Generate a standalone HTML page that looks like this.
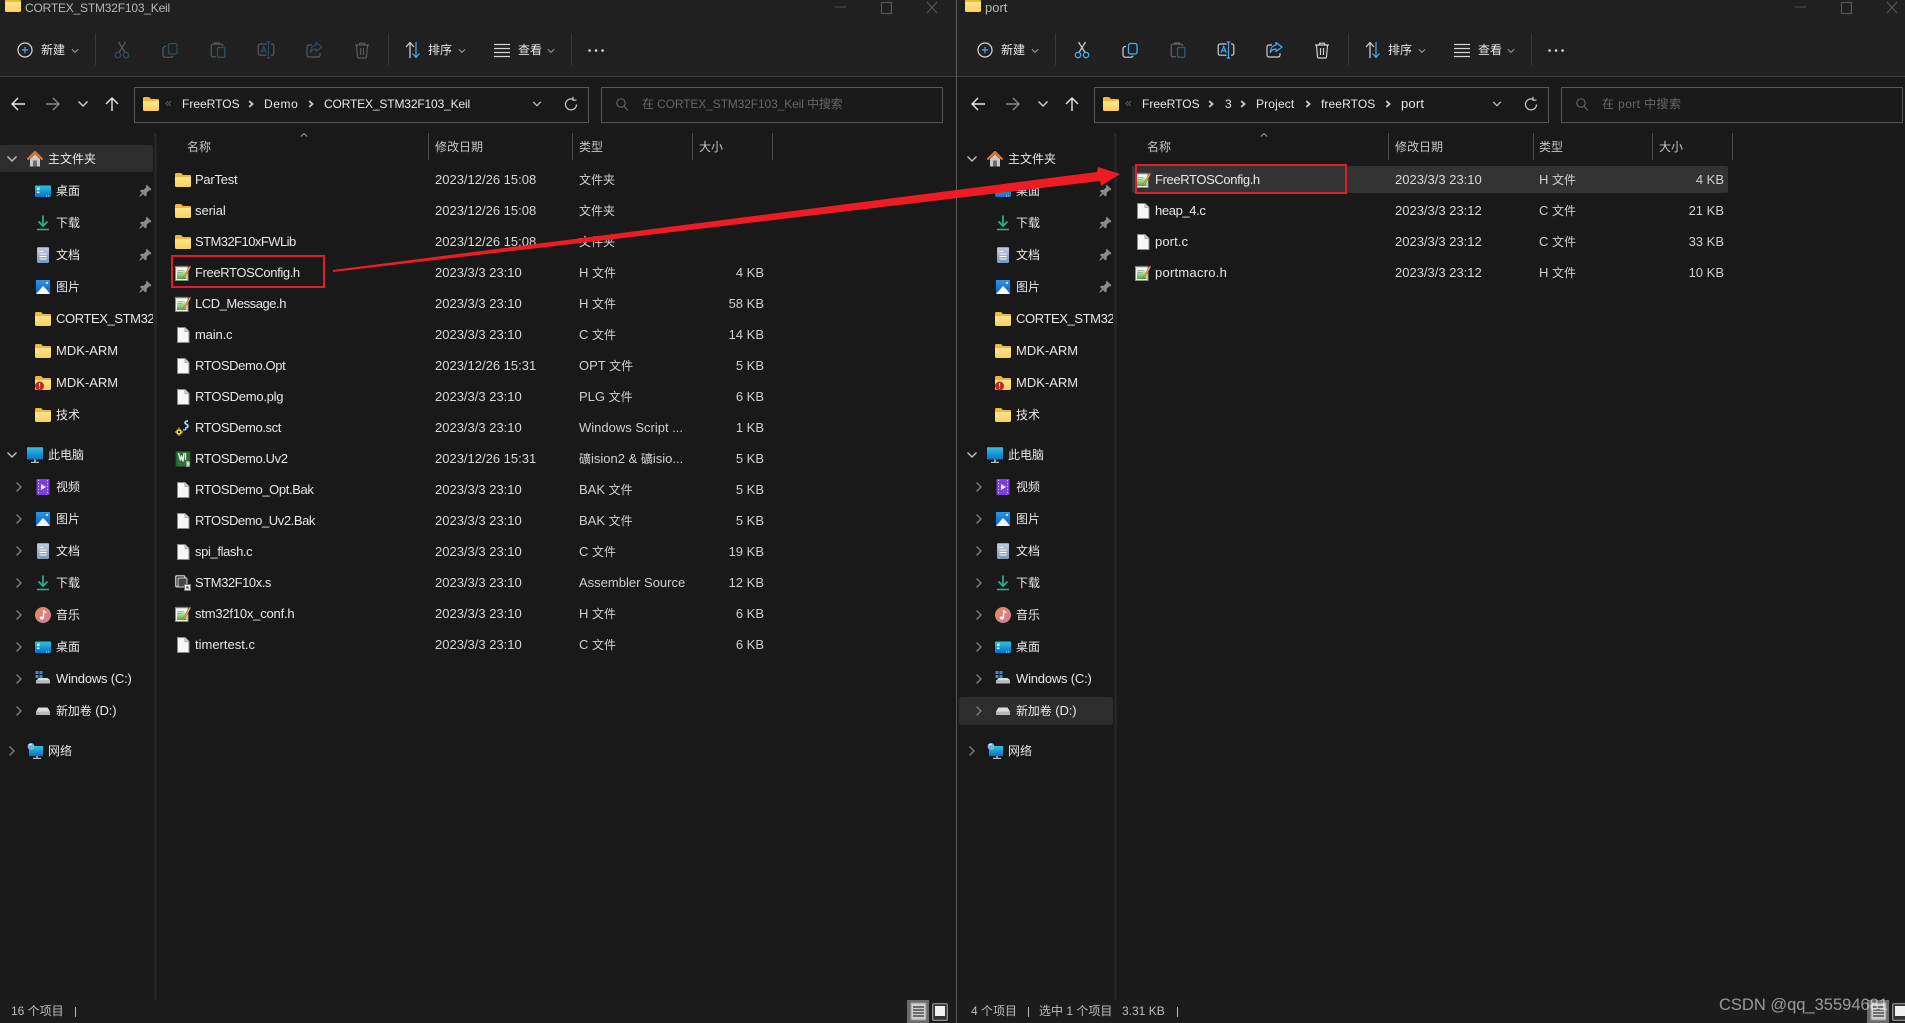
<!DOCTYPE html>
<html lang="zh">
<head>
<meta charset="utf-8">
<title>FreeRTOS</title>
<style>
html,body{margin:0;padding:0;width:1905px;height:1023px;overflow:hidden;background:#191919}
body{font-family:"Liberation Sans","Noto Sans CJK SC",sans-serif;color:#e6e6e6;position:relative}
.w{position:absolute;top:0;height:1023px;overflow:hidden;background:#191919}
.in{position:absolute;top:0;left:0;width:960px;height:1023px}
.bar{position:absolute;left:-4px;top:0;width:964px;height:76px;background:#202020}
.ln{position:absolute;left:-4px;top:76px;width:964px;height:1px;background:#3d3d3d}
.st{position:absolute;left:-4px;top:1000px;width:964px;height:23px;background:#1c1c1c}
.dv{position:absolute;left:154px;top:133px;width:3px;height:867px;background:#252525}
.box{position:absolute;box-sizing:border-box;border:1px solid #565656;height:36px;top:87px}
.hl{position:absolute;background:#2d2d2d;border-radius:2px}
.sl{position:absolute;background:#333;border-radius:2px}
.t{position:absolute;white-space:nowrap;line-height:18px;margin-top:-9px;font-size:13px;color:#e8e8e8}
.n{letter-spacing:-.375px}
.d{color:#d8d8d8}
.y{color:#d0d0d0}
.s{text-align:right;width:60px;left:704px;color:#d0d0d0}
.c{font-size:12px}
.h{font-size:12px;color:#c4c4c4}
.a{font-size:12px;color:#e8e8e8}
.q{font-size:12px;color:#666}
.k{font-size:12px;color:#bdbdbd}
b{font-weight:normal;font-size:12px}
.i{position:absolute;width:16px;height:16px;overflow:visible}
.ti{position:absolute;width:20px;height:20px;top:40px;overflow:visible}
.sep{position:absolute;width:1px;background:#3a3a3a;top:33px;height:32px}
.hs{position:absolute;width:1px;background:#4b4b4b;top:133px;height:27px}
.tx{position:absolute;top:1007px;width:1px;height:10px;background:#bbb}
</style>
</head>
<body>
<svg width="0" height="0" style="position:absolute">
<defs>
<linearGradient id="gf" x1="0" y1="0" x2="0" y2="1"><stop offset="0" stop-color="#fee48e"/><stop offset="1" stop-color="#fad05e"/></linearGradient>
<linearGradient id="gb" x1="0" y1="0" x2="0" y2="1"><stop offset="0" stop-color="#2cc3e3"/><stop offset="1" stop-color="#0f6fc4"/></linearGradient>
<linearGradient id="gg" x1="0" y1="0" x2="0" y2="1"><stop offset="0" stop-color="#e8f3d6"/><stop offset="1" stop-color="#3fae3a"/></linearGradient>
<linearGradient id="gd" x1="0" y1="0" x2="0" y2="1"><stop offset="0" stop-color="#c0cedd"/><stop offset="1" stop-color="#7d96b2"/></linearGradient>
<linearGradient id="gp" x1="0" y1="0" x2="0" y2="1"><stop offset="0" stop-color="#2997e8"/><stop offset="1" stop-color="#0a5fc2"/></linearGradient>
<linearGradient id="gm" x1="0" y1="0" x2="1" y2="1"><stop offset="0" stop-color="#f08b4a"/><stop offset="1" stop-color="#c77aa8"/></linearGradient>
<symbol id="fo" viewBox="0 0 16 16"><path d="M0 2.500C0 1.700.5 1 1.300 1H6l2 2h7c.6 0 1 .4 1 1v2H0z" fill="#f0b73c"/><path d="M0 5h16v8.600c0 .8-.6 1.400-1.400 1.400H1.400C.6 15 0 14.400 0 13.600z" fill="url(#gf)"/></symbol>
<symbol id="fx" viewBox="0 0 16 16"><path d="M0 2.500C0 1.700.5 1 1.300 1H6l2 2h7c.6 0 1 .4 1 1v2H0z" fill="#f0b73c"/><path d="M0 5h16v8.600c0 .8-.6 1.400-1.400 1.400H1.400C.6 15 0 14.400 0 13.600z" fill="url(#gf)"/><circle cx="4.500" cy="11" r="4.500" fill="#c9231d"/><path d="M4.500 8v3.400M4.500 12.800v.9" stroke="#fff" stroke-width="1.200"/></symbol>
<symbol id="hf" viewBox="0 0 16 16"><rect x=".5" y="1.500" width="12.500" height="14" fill="#f6f6f6" stroke="#8d8d8d"/><path d="M1 1.500h12M2 .5v2M4 .5v2M6 .5v2M8 .5v2M10 .5v2M12 .5v2" stroke="#777" stroke-width=".8"/><rect x="2" y="5" width="9.500" height="9" fill="url(#gg)"/><path d="M2.500 5.500h6M2.500 7.500h5" stroke="#9a9a9a" stroke-width=".8"/><path d="M14.600 1 L8.500 12 L7.400 14.200 L9.600 13 L15.800 2z" fill="#f4b822" stroke="#8c5f10" stroke-width=".5"/><path d="M14.600 1l1.200 1" stroke="#d43a2a" stroke-width="1.400"/></symbol>
<symbol id="dc" viewBox="0 0 16 16"><path d="M2.500.5h7.500L14 4.500v11H2.500z" fill="#f7f7f7" stroke="#8a8a8a"/><path d="M10 .5v4h4" fill="#d8d8d8" stroke="#9a9a9a" stroke-width=".8"/></symbol>
<symbol id="sc" viewBox="0 0 16 16"><path d="M13 1c-2 0-3 1-3 2s3 1.500 3 3-2 2-3 2" fill="none" stroke="#39b8c9" stroke-width="2"/><path d="M13 1c-2 0-3 1-3 2s3 1.500 3 3-2 2-3 2" fill="none" stroke="#e6f7fa" stroke-width=".7"/><path d="M8 10c1.500 0 3-.3 3-1" stroke="#ddd" stroke-width="1.200" fill="none"/><circle cx="4" cy="12" r="3.300" fill="#e8e020" stroke="#222" stroke-width=".8"/><circle cx="4" cy="12" r="1.200" fill="#111"/><path d="M4 7.500v1.500M4 15v1M0 12h1M7 12h1" stroke="#e8e020"/></symbol>
<symbol id="uv" viewBox="0 0 16 16"><rect x="1" y=".5" width="14" height="15" fill="#2f6f3a" stroke="#1d4a25"/><path d="M3.500 2l2 7.500 1-5 1.500 6 1-8.500M10.500 2v7" stroke="#e6f2e6" stroke-width="1.300" fill="none"/><path d="M11 11h3v1.500h-2v.8h2V15h-3" fill="none" stroke="#fff" stroke-width=".9"/></symbol>
<symbol id="as" viewBox="0 0 16 16"><rect x=".8" y=".8" width="9" height="11" rx="1" fill="#222" stroke="#e2e2e2" stroke-width="1.200"/><rect x="3" y="3" width="9" height="9" rx="1" fill="#444" stroke="#d0d0d0"/><rect x="9.500" y="9.500" width="6" height="6" fill="#eee" stroke="#777"/><rect x="11.500" y="11.500" width="2" height="2" fill="#333"/></symbol>
<symbol id="de" viewBox="0 0 16 16"><rect x="0" y="2.500" width="16" height="11.500" rx="1" fill="url(#gb)"/><rect x="2" y="4.500" width="2.500" height="2.500" fill="#e6fbff"/><rect x="2" y="8.500" width="2.500" height="1.500" fill="#bdeefa"/><path d="M11 13h1M13 13h1" stroke="#e6fbff" stroke-width=".8"/></symbol>
<symbol id="dl" viewBox="0 0 16 16"><path d="M8 .5v10M3.500 6.500L8 11l4.500-4.500" fill="none" stroke="#26b58f" stroke-width="1.700"/><path d="M2 14.500h12" stroke="#26b58f" stroke-width="1.500"/></symbol>
<symbol id="dt" viewBox="0 0 16 16"><rect x="2" y=".2" width="12" height="15.800" rx="1" fill="url(#gd)"/><path d="M4.500 4.500h4M4.500 7h7M4.500 9.500h7M4.500 12h7" stroke="#fff" stroke-width="1"/></symbol>
<symbol id="pc" viewBox="0 0 16 16"><rect x="1" y="1" width="14" height="14" fill="url(#gp)"/><path d="M1 15L8 7l4 4 3 4z" fill="#f5f8fc"/><circle cx="12" cy="4" r="1" fill="#fff"/></symbol>
<symbol id="ho" viewBox="0 0 16 16"><path d="M3 8v7.500h10V8L8 3z" fill="#c8c8c8"/><rect x="6" y="9.500" width="4" height="6" fill="#6d6d6d"/><path d="M.5 8.500L8 1l7.500 7.500" fill="none" stroke="#e9751d" stroke-width="2.200"/></symbol>
<symbol id="co" viewBox="0 0 16 16"><rect x="0" y=".2" width="16" height="12.300" rx=".5" fill="url(#gb)"/><rect x="7" y="12.500" width="2" height="2.500" fill="#9aa5ad"/><rect x="4" y="14.800" width="8" height="1.200" fill="#b5bec5"/></symbol>
<symbol id="vi" viewBox="0 0 16 16"><rect x="1.500" y="0" width="13" height="16" rx="1" fill="#7c3ee0"/><path d="M3 1.500h1M3 4.500h1M3 7.500h1M3 10.500h1M3 13.500h1M12 1.500h1M12 4.500h1M12 7.500h1M12 10.500h1M12 13.500h1" stroke="#d9c6ff" stroke-width="1.300"/><path d="M6 5l5 3-5 3z" fill="#f1e7ff"/></symbol>
<symbol id="mu" viewBox="0 0 16 16"><circle cx="8" cy="8" r="8" fill="url(#gm)"/><path d="M8.500 3v8M8.500 3.500c1 1 2 1 2.500 2.500" stroke="#fff" stroke-width="1.300" fill="none"/><ellipse cx="6.800" cy="11" rx="2" ry="1.500" fill="#fff"/></symbol>
<symbol id="wi" viewBox="0 0 16 16"><path d="M.5 0h3v3h-3zM4.500 0h3v3h-3zM.5 4h3v3h-3zM4.500 4h3v3h-3z" fill="#1e96e6"/><path d="M2 9l1.500-2h9L15 9z" fill="#dcdcdc"/><rect x="1" y="9" width="14" height="3.500" rx=".5" fill="#bcbcbc"/><rect x="2.500" y="10.200" width="1.500" height="1" fill="#3edb4c"/></symbol>
<symbol id="dr" viewBox="0 0 16 16"><path d="M3.500 4.500h9L15 8.500H1z" fill="#dedede"/><rect x="1" y="8.500" width="14" height="3.500" rx=".6" fill="#b9b9b9"/><rect x="2.500" y="9.700" width="1.500" height="1" fill="#3edb4c"/></symbol>
<symbol id="ne" viewBox="0 0 16 16"><rect x="2" y="3" width="14" height="10" fill="url(#gb)"/><rect x="9" y="13" width="2" height="1.800" fill="#9aa5ad"/><rect x="6" y="14.800" width="8" height="1.200" fill="#b5bec5"/><circle cx="4" cy="3.500" r="3.500" fill="#6db9dd"/><path d="M2 2.500a2 2 0 0 1 2.500-1" stroke="#e7fbff" fill="none"/></symbol>
<symbol id="pn" viewBox="0 0 16 16"><path d="M9.500 1.500l5 5-1.500 1-.8-.2-2.600 2.600.2 2.400-1.300 1.200-5.500-5.500 1.200-1.300 2.400.2 2.600-2.600-.2-.8zM4.500 10l-3 4.500 4.500-3z" fill="#8b8b8b"/></symbol>
<symbol id="cd" viewBox="0 0 16 16"><path d="M3.500 5.500L8 10l4.500-4.500" fill="none" stroke="currentColor" stroke-width="1.500"/></symbol>
<symbol id="cr" viewBox="0 0 16 16"><path d="M5.500 3.500L10 8l-4.500 4.500" fill="none" stroke="currentColor" stroke-width="1.500"/></symbol>
<symbol id="cb" viewBox="0 0 16 16"><path d="M5 3L10.500 8 5 13" fill="none" stroke="currentColor" stroke-width="3"/></symbol>
<symbol id="tc" viewBox="0 0 20 20"><path d="M6.500 2L13 12.500M13.500 2L7 12.500" stroke="#cfcfcf" stroke-width="1.200" fill="none"/><circle cx="6" cy="15" r="2.700" stroke="#45ade8" stroke-width="1.300" fill="none"/><circle cx="14" cy="15" r="2.700" stroke="#45ade8" stroke-width="1.300" fill="none"/></symbol>
<symbol id="tp" viewBox="0 0 20 20"><rect x="8.500" y="3.500" width="8.500" height="10.500" rx="1.800" stroke="#45ade8" stroke-width="1.300" fill="none"/><path d="M6 6.500H5.200A2.200 2.200 0 0 0 3 8.700V15a2.200 2.200 0 0 0 2.200 2.200H11a2.200 2.200 0 0 0 2-1.500" stroke="#cfcfcf" stroke-width="1.200" fill="none"/></symbol>
<symbol id="tv" viewBox="0 0 20 20"><path d="M8 16.800H5A1.800 1.800 0 0 1 3.200 15V6A1.800 1.800 0 0 1 5 4.200h8A1.800 1.800 0 0 1 14.800 6" stroke="#cfcfcf" stroke-width="1.200" fill="none"/><path d="M6.500 4.500V3h5v1.500" stroke="#cfcfcf" stroke-width="1.200" fill="none"/><rect x="9.500" y="7.500" width="7.300" height="9.800" rx="1" stroke="#45ade8" stroke-width="1.300" fill="none"/></symbol>
<symbol id="tr" viewBox="0 0 20 20"><path d="M10.500 4H4a1.800 1.800 0 0 0-1.800 1.800v7.600A1.800 1.800 0 0 0 4 15.200h6.500M15 4h1a1.800 1.800 0 0 1 1.800 1.800v7.600a1.800 1.800 0 0 1-1.800 1.800h-1" stroke="#cfcfcf" stroke-width="1.200" fill="none"/><path d="M10.700 2h3.600M10.700 18h3.600M12.500 2v16" stroke="#45ade8" stroke-width="1.200" fill="none"/><path d="M5 12.800L7.700 6.500l2.700 6.300M6 10.800h3.400" stroke="#45ade8" stroke-width="1.200" fill="none"/></symbol>
<symbol id="ts" viewBox="0 0 20 20"><path d="M8 5H5A2 2 0 0 0 3 7v8a2 2 0 0 0 2 2h9a2 2 0 0 0 2-2v-2" stroke="#cfcfcf" stroke-width="1.200" fill="none"/><path d="M12 2.500l6 4.500-6 4.500V9c-3 0-4.500 1-5.700 3.500C6.500 8.500 8.500 5.500 12 5.200z" stroke="#45ade8" stroke-width="1.200" fill="none" stroke-linejoin="round"/></symbol>
<symbol id="td" viewBox="0 0 20 20"><path d="M3 5h14M7.500 5V3.200h5V5M4.500 5l1 12a1.300 1.300 0 0 0 1.300 1h6.400a1.300 1.300 0 0 0 1.300-1l1-12M8.500 8v7M11.500 8v7" stroke="#cfcfcf" stroke-width="1.200" fill="none"/></symbol>
<symbol id="tn" viewBox="0 0 20 20"><circle cx="10" cy="10" r="7" stroke="#d6d6d6" stroke-width="1.200" fill="none"/><path d="M10 6.800v6.400M6.800 10h6.400" stroke="#45ade8" stroke-width="1.200"/></symbol>
<symbol id="to" viewBox="0 0 20 20"><path d="M7 18V3M3 7l4-4.500L11 7" stroke="#d6d6d6" stroke-width="1.200" fill="none"/><path d="M13 2v15.500M9.500 13.500l3.500 4 3.500-4" stroke="#45ade8" stroke-width="1.200" fill="none"/></symbol>
<symbol id="tl" viewBox="0 0 20 20"><path d="M2 4.500h16M2 8.500h16M2 12.500h16M2 16.500h16" stroke="#d6d6d6" stroke-width="1.200"/></symbol>
<symbol id="vd" viewBox="0 0 22 23"><rect width="22" height="23" fill="#6b6b6b"/><rect x="4" y="3" width="15" height="17" fill="#cfcfcf" stroke="#999"/><path d="M6 7h11M6 10h11M6 13h11M6 16h11" stroke="#333" stroke-width="1.200"/></symbol>
<symbol id="vt" viewBox="0 0 16 18"><rect x=".7" y=".7" width="14.600" height="16.600" rx="1" fill="#333" stroke="#9a9a9a" stroke-width="1.200"/><rect x="3" y="3" width="10" height="10" fill="#f2f2f2"/></symbol>
</defs>
</svg>

<!-- LEFT WINDOW -->
<div class="w" style="left:0;width:956px"><div class="in">
<div class="bar"></div><div class="ln"></div><div class="st"></div>
<svg class="i" style="left:5px;top:-3px"><use href="#fo"/></svg>
<span class="t a" style="left:25px;top:8px;color:#b8b8b8;letter-spacing:-.2px">CORTEX_STM32F103_Keil</span>
<svg class="i" style="left:833px;top:-1px"><path d="M2 8h11" stroke="#555"/></svg>
<svg class="i" style="left:878px;top:-1px"><rect x="3.500" y="3.500" width="10" height="11" fill="none" stroke="#555" stroke-width="1.200"/></svg>
<svg class="i" style="left:924px;top:-1px"><path d="M3 3l10 11M13 3L3 14" stroke="#555" stroke-width="1.100"/></svg>

<svg class="ti" style="left:15px"><use href="#tn"/></svg>
<span class="t c" style="left:41px;top:50px;color:#e6e6e6">新建</span>
<svg class="i" style="left:67px;top:43px;color:#999;transform:scale(.7)"><use href="#cd"/></svg>
<div class="sep" style="left:95px"></div>
<svg class="ti" style="left:112px;opacity:.33"><use href="#tc"/></svg>
<svg class="ti" style="left:160px;opacity:.33"><use href="#tp"/></svg>
<svg class="ti" style="left:208px;opacity:.33"><use href="#tv"/></svg>
<svg class="ti" style="left:256px;opacity:.33"><use href="#tr"/></svg>
<svg class="ti" style="left:304px;opacity:.33"><use href="#ts"/></svg>
<svg class="ti" style="left:352px;opacity:.33"><use href="#td"/></svg>
<div class="sep" style="left:388px"></div>
<svg class="ti" style="left:403px"><use href="#to"/></svg>
<span class="t c" style="left:428px;top:50px">排序</span>
<svg class="i" style="left:454px;top:43px;color:#999;transform:scale(.7)"><use href="#cd"/></svg>
<svg class="ti" style="left:492px"><use href="#tl"/></svg>
<span class="t c" style="left:518px;top:50px">查看</span>
<svg class="i" style="left:543px;top:43px;color:#999;transform:scale(.7)"><use href="#cd"/></svg>
<div class="sep" style="left:571px"></div>
<svg class="i" style="left:588px;top:42px"><path d="M1.500 8.500h.1M8 8.500h.1M14.500 8.500h.1" stroke="#ddd" stroke-width="2.500" stroke-linecap="round"/></svg>

<svg class="i" style="left:10px;top:96px"><path d="M15 8H2M8 2L2 8l6 6" fill="none" stroke="#e6e6e6" stroke-width="1.400"/></svg>
<svg class="i" style="left:45px;top:96px"><path d="M1 8h13M8 2l6 6-6 6" fill="none" stroke="#8a8a8a" stroke-width="1.400"/></svg>
<svg class="i" style="left:75px;top:96px;color:#ccc"><use href="#cd"/></svg>
<svg class="i" style="left:104px;top:96px"><path d="M8 15V2M2 8l6-6 6 6" fill="none" stroke="#e6e6e6" stroke-width="1.400"/></svg>
<div class="box" style="left:134px;width:455px"></div>
<svg class="i" style="left:143px;top:96px"><use href="#fo"/></svg>
<span class="t c" style="left:165px;top:103px;color:#666">«</span>
<span class="t a" style="left:182px;top:104px">FreeRTOS</span>
<svg class="i" style="left:243px;top:96px;color:#ccc;transform:scale(.6)"><use href="#cb"/></svg>
<span class="t a" style="left:264px;top:104px;letter-spacing:.6px">Demo</span>
<svg class="i" style="left:303px;top:96px;color:#ccc;transform:scale(.6)"><use href="#cb"/></svg>
<span class="t a" style="left:324px;top:104px;letter-spacing:-.15px">CORTEX_STM32F103_Keil</span>
<svg class="i" style="left:529px;top:96px;color:#bbb;transform:scale(.85)"><use href="#cd"/></svg>
<svg class="i" style="left:563px;top:96px"><path d="M13.500 8.500A5.500 5.500 0 1 1 10.500 3.500M10 .8v3.400h3.400" fill="none" stroke="#ccc" stroke-width="1.200"/></svg>
<div class="box" style="left:601px;width:342px"></div>
<svg class="i" style="left:614px;top:96px"><circle cx="7" cy="7" r="4.200" fill="none" stroke="#666" stroke-width="1.100"/><path d="M10 10l4 4.500" stroke="#666" stroke-width="1.100"/></svg>
<span class="t q" style="left:642px;top:104px;letter-spacing:-.12px">在 CORTEX_STM32F103_Keil 中搜索</span>

<div class="dv"></div>
<div class="hl" style="left:0;top:145px;width:153px;height:27px"></div>
<svg class="i" style="left:4px;top:151px;color:#bbb"><use href="#cd"/></svg>
<svg class="i" style="left:27px;top:151px"><use href="#ho"/></svg><span class="t c" style="left:48px;top:159px">主文件夹</span>
<svg class="i" style="left:35px;top:183px"><use href="#de"/></svg><span class="t c" style="left:56px;top:191px">桌面</span><svg class="i" style="left:137px;top:183px"><use href="#pn"/></svg>
<svg class="i" style="left:35px;top:215px"><use href="#dl"/></svg><span class="t c" style="left:56px;top:223px">下载</span><svg class="i" style="left:137px;top:215px"><use href="#pn"/></svg>
<svg class="i" style="left:35px;top:247px"><use href="#dt"/></svg><span class="t c" style="left:56px;top:255px">文档</span><svg class="i" style="left:137px;top:247px"><use href="#pn"/></svg>
<svg class="i" style="left:35px;top:279px"><use href="#pc"/></svg><span class="t c" style="left:56px;top:287px">图片</span><svg class="i" style="left:137px;top:279px"><use href="#pn"/></svg>
<svg class="i" style="left:35px;top:311px"><use href="#fo"/></svg><span class="t" style="left:56px;top:319px;width:97px;overflow:hidden;letter-spacing:-.4px">CORTEX_STM32F103_Keil</span>
<svg class="i" style="left:35px;top:343px"><use href="#fo"/></svg><span class="t" style="left:56px;top:351px">MDK-ARM</span>
<svg class="i" style="left:35px;top:375px"><use href="#fx"/></svg><span class="t" style="left:56px;top:383px">MDK-ARM</span>
<svg class="i" style="left:35px;top:407px"><use href="#fo"/></svg><span class="t c" style="left:56px;top:415px">技术</span>
<svg class="i" style="left:4px;top:447px;color:#bbb"><use href="#cd"/></svg>
<svg class="i" style="left:27px;top:447px"><use href="#co"/></svg><span class="t c" style="left:48px;top:455px">此电脑</span>
<svg class="i" style="left:11px;top:479px;color:#777"><use href="#cr"/></svg><svg class="i" style="left:35px;top:479px"><use href="#vi"/></svg><span class="t c" style="left:56px;top:487px">视频</span>
<svg class="i" style="left:11px;top:511px;color:#777"><use href="#cr"/></svg><svg class="i" style="left:35px;top:511px"><use href="#pc"/></svg><span class="t c" style="left:56px;top:519px">图片</span>
<svg class="i" style="left:11px;top:543px;color:#777"><use href="#cr"/></svg><svg class="i" style="left:35px;top:543px"><use href="#dt"/></svg><span class="t c" style="left:56px;top:551px">文档</span>
<svg class="i" style="left:11px;top:575px;color:#777"><use href="#cr"/></svg><svg class="i" style="left:35px;top:575px"><use href="#dl"/></svg><span class="t c" style="left:56px;top:583px">下载</span>
<svg class="i" style="left:11px;top:607px;color:#777"><use href="#cr"/></svg><svg class="i" style="left:35px;top:607px"><use href="#mu"/></svg><span class="t c" style="left:56px;top:615px">音乐</span>
<svg class="i" style="left:11px;top:639px;color:#777"><use href="#cr"/></svg><svg class="i" style="left:35px;top:639px"><use href="#de"/></svg><span class="t c" style="left:56px;top:647px">桌面</span>
<svg class="i" style="left:11px;top:671px;color:#777"><use href="#cr"/></svg><svg class="i" style="left:35px;top:671px"><use href="#wi"/></svg><span class="t" style="left:56px;top:679px;letter-spacing:-.2px">Windows (C:)</span>
<svg class="i" style="left:11px;top:703px;color:#777"><use href="#cr"/></svg><svg class="i" style="left:35px;top:703px"><use href="#dr"/></svg><span class="t" style="left:56px;top:711px;letter-spacing:-.1px"><b>新加卷</b> (D:)</span>
<svg class="i" style="left:4px;top:743px;color:#777"><use href="#cr"/></svg><svg class="i" style="left:27px;top:743px"><use href="#ne"/></svg><span class="t c" style="left:48px;top:751px">网络</span>

<span class="t h" style="left:187px;top:147px">名称</span>
<svg class="i" style="left:296px;top:127px"><path d="M5 9.500L8 6.500l3 3" fill="none" stroke="#999"/></svg>
<div class="hs" style="left:428px"></div><span class="t h" style="left:435px;top:147px">修改日期</span>
<div class="hs" style="left:572px"></div><span class="t h" style="left:579px;top:147px">类型</span>
<div class="hs" style="left:692px"></div><span class="t h" style="left:699px;top:147px">大小</span>
<div class="hs" style="left:772px"></div>

<svg class="i" style="left:175px;top:172px"><use href="#fo"/></svg><span class="t n" style="left:195px;top:180px;letter-spacing:-.25px">ParTest</span><span class="t d" style="left:435px;top:180px">2023/12/26 15:08</span><span class="t y" style="left:579px;top:180px"><b>文件夹</b></span>
<svg class="i" style="left:175px;top:203px"><use href="#fo"/></svg><span class="t n" style="left:195px;top:211px;letter-spacing:-.05px">serial</span><span class="t d" style="left:435px;top:211px">2023/12/26 15:08</span><span class="t y" style="left:579px;top:211px"><b>文件夹</b></span>
<svg class="i" style="left:175px;top:234px"><use href="#fo"/></svg><span class="t n" style="left:195px;top:242px;letter-spacing:-.55px">STM32F10xFWLib</span><span class="t d" style="left:435px;top:242px">2023/12/26 15:08</span><span class="t y" style="left:579px;top:242px"><b>文件夹</b></span>
<svg class="i" style="left:175px;top:265px"><use href="#hf"/></svg><span class="t n" style="left:195px;top:273px">FreeRTOSConfig.h</span><span class="t d" style="left:435px;top:273px">2023/3/3 23:10</span><span class="t y" style="left:579px;top:273px">H <b>文件</b></span><span class="t s" style="top:273px">4 KB</span>
<svg class="i" style="left:175px;top:296px"><use href="#hf"/></svg><span class="t n" style="left:195px;top:304px;letter-spacing:-.45px">LCD_Message.h</span><span class="t d" style="left:435px;top:304px">2023/3/3 23:10</span><span class="t y" style="left:579px;top:304px">H <b>文件</b></span><span class="t s" style="top:304px">58 KB</span>
<svg class="i" style="left:175px;top:327px"><use href="#dc"/></svg><span class="t n" style="left:195px;top:335px;letter-spacing:-.15px">main.c</span><span class="t d" style="left:435px;top:335px">2023/3/3 23:10</span><span class="t y" style="left:579px;top:335px">C <b>文件</b></span><span class="t s" style="top:335px">14 KB</span>
<svg class="i" style="left:175px;top:358px"><use href="#dc"/></svg><span class="t n" style="left:195px;top:366px">RTOSDemo.Opt</span><span class="t d" style="left:435px;top:366px">2023/12/26 15:31</span><span class="t y" style="left:579px;top:366px">OPT <b>文件</b></span><span class="t s" style="top:366px">5 KB</span>
<svg class="i" style="left:175px;top:389px"><use href="#dc"/></svg><span class="t n" style="left:195px;top:397px;letter-spacing:-.25px">RTOSDemo.plg</span><span class="t d" style="left:435px;top:397px">2023/3/3 23:10</span><span class="t y" style="left:579px;top:397px">PLG <b>文件</b></span><span class="t s" style="top:397px">6 KB</span>
<svg class="i" style="left:175px;top:420px"><use href="#sc"/></svg><span class="t n" style="left:195px;top:428px">RTOSDemo.sct</span><span class="t d" style="left:435px;top:428px">2023/3/3 23:10</span><span class="t y" style="left:579px;top:428px">Windows Script ...</span><span class="t s" style="top:428px">1 KB</span>
<svg class="i" style="left:175px;top:451px"><use href="#uv"/></svg><span class="t n" style="left:195px;top:459px">RTOSDemo.Uv2</span><span class="t d" style="left:435px;top:459px">2023/12/26 15:31</span><span class="t y" style="left:579px;top:459px"><b>礦</b>ision2 &amp; <b>礦</b>isio...</span><span class="t s" style="top:459px">5 KB</span>
<svg class="i" style="left:175px;top:482px"><use href="#dc"/></svg><span class="t n" style="left:195px;top:490px">RTOSDemo_Opt.Bak</span><span class="t d" style="left:435px;top:490px">2023/3/3 23:10</span><span class="t y" style="left:579px;top:490px">BAK <b>文件</b></span><span class="t s" style="top:490px">5 KB</span>
<svg class="i" style="left:175px;top:513px"><use href="#dc"/></svg><span class="t n" style="left:195px;top:521px;letter-spacing:-.42px">RTOSDemo_Uv2.Bak</span><span class="t d" style="left:435px;top:521px">2023/3/3 23:10</span><span class="t y" style="left:579px;top:521px">BAK <b>文件</b></span><span class="t s" style="top:521px">5 KB</span>
<svg class="i" style="left:175px;top:544px"><use href="#dc"/></svg><span class="t n" style="left:195px;top:552px">spi_flash.c</span><span class="t d" style="left:435px;top:552px">2023/3/3 23:10</span><span class="t y" style="left:579px;top:552px">C <b>文件</b></span><span class="t s" style="top:552px">19 KB</span>
<svg class="i" style="left:175px;top:575px"><use href="#as"/></svg><span class="t n" style="left:195px;top:583px;letter-spacing:-.45px">STM32F10x.s</span><span class="t d" style="left:435px;top:583px">2023/3/3 23:10</span><span class="t y" style="left:579px;top:583px">Assembler Source</span><span class="t s" style="top:583px">12 KB</span>
<svg class="i" style="left:175px;top:606px"><use href="#hf"/></svg><span class="t n" style="left:195px;top:614px;letter-spacing:-.2px">stm32f10x_conf.h</span><span class="t d" style="left:435px;top:614px">2023/3/3 23:10</span><span class="t y" style="left:579px;top:614px">H <b>文件</b></span><span class="t s" style="top:614px">6 KB</span>
<svg class="i" style="left:175px;top:637px"><use href="#dc"/></svg><span class="t n" style="left:195px;top:645px;letter-spacing:0">timertest.c</span><span class="t d" style="left:435px;top:645px">2023/3/3 23:10</span><span class="t y" style="left:579px;top:645px">C <b>文件</b></span><span class="t s" style="top:645px">6 KB</span>

<span class="t k" style="left:11px;top:1011px">16 个项目</span><div class="tx" style="left:75px"></div>
<svg style="position:absolute;left:907px;top:1000px;width:22px;height:23px"><use href="#vd"/></svg>
<svg style="position:absolute;left:932px;top:1003px;width:16px;height:18px"><use href="#vt"/></svg>
</div></div>

<div style="position:absolute;left:956px;top:0;width:1px;height:1023px;background:#5a5a5a"></div>

<!-- RIGHT WINDOW -->
<div class="w" style="left:957px;width:948px"><div class="in" style="left:3px">
<div class="bar"></div><div class="ln"></div><div class="st"></div>
<svg class="i" style="left:5px;top:-3px"><use href="#fo"/></svg>
<span class="t a" style="left:25px;top:8px;color:#b8b8b8;font-size:13px">port</span>
<svg class="i" style="left:833px;top:-1px"><path d="M2 8h11" stroke="#555"/></svg>
<svg class="i" style="left:878px;top:-1px"><rect x="3.500" y="3.500" width="10" height="11" fill="none" stroke="#555" stroke-width="1.200"/></svg>
<svg class="i" style="left:924px;top:-1px"><path d="M3 3l10 11M13 3L3 14" stroke="#555" stroke-width="1.100"/></svg>

<svg class="ti" style="left:15px"><use href="#tn"/></svg>
<span class="t c" style="left:41px;top:50px">新建</span>
<svg class="i" style="left:67px;top:43px;color:#999;transform:scale(.7)"><use href="#cd"/></svg>
<div class="sep" style="left:95px"></div>
<svg class="ti" style="left:112px"><use href="#tc"/></svg>
<svg class="ti" style="left:160px"><use href="#tp"/></svg>
<svg class="ti" style="left:208px;opacity:.4"><use href="#tv"/></svg>
<svg class="ti" style="left:256px"><use href="#tr"/></svg>
<svg class="ti" style="left:304px"><use href="#ts"/></svg>
<svg class="ti" style="left:352px"><use href="#td"/></svg>
<div class="sep" style="left:388px"></div>
<svg class="ti" style="left:403px"><use href="#to"/></svg>
<span class="t c" style="left:428px;top:50px">排序</span>
<svg class="i" style="left:454px;top:43px;color:#999;transform:scale(.7)"><use href="#cd"/></svg>
<svg class="ti" style="left:492px"><use href="#tl"/></svg>
<span class="t c" style="left:518px;top:50px">查看</span>
<svg class="i" style="left:543px;top:43px;color:#999;transform:scale(.7)"><use href="#cd"/></svg>
<div class="sep" style="left:571px"></div>
<svg class="i" style="left:588px;top:42px"><path d="M1.500 8.500h.1M8 8.500h.1M14.500 8.500h.1" stroke="#ddd" stroke-width="2.500" stroke-linecap="round"/></svg>

<svg class="i" style="left:10px;top:96px"><path d="M15 8H2M8 2L2 8l6 6" fill="none" stroke="#e6e6e6" stroke-width="1.400"/></svg>
<svg class="i" style="left:45px;top:96px"><path d="M1 8h13M8 2l6 6-6 6" fill="none" stroke="#8a8a8a" stroke-width="1.400"/></svg>
<svg class="i" style="left:75px;top:96px;color:#ccc"><use href="#cd"/></svg>
<svg class="i" style="left:104px;top:96px"><path d="M8 15V2M2 8l6-6 6 6" fill="none" stroke="#e6e6e6" stroke-width="1.400"/></svg>
<div class="box" style="left:134px;width:455px"></div>
<svg class="i" style="left:143px;top:96px"><use href="#fo"/></svg>
<span class="t c" style="left:165px;top:103px;color:#666">«</span>
<span class="t a" style="left:182px;top:104px">FreeRTOS</span>
<svg class="i" style="left:243px;top:96px;color:#ccc;transform:scale(.6)"><use href="#cb"/></svg>
<span class="t a" style="left:265px;top:104px">3</span>
<svg class="i" style="left:275px;top:96px;color:#ccc;transform:scale(.6)"><use href="#cb"/></svg>
<span class="t a" style="left:296px;top:104px;letter-spacing:.15px">Project</span>
<svg class="i" style="left:340px;top:96px;color:#ccc;transform:scale(.6)"><use href="#cb"/></svg>
<span class="t a" style="left:361px;top:104px;letter-spacing:.1px">freeRTOS</span>
<svg class="i" style="left:420px;top:96px;color:#ccc;transform:scale(.6)"><use href="#cb"/></svg>
<span class="t a" style="left:441px;top:104px;font-size:13px;letter-spacing:.2px">port</span>
<svg class="i" style="left:529px;top:96px;color:#bbb;transform:scale(.85)"><use href="#cd"/></svg>
<svg class="i" style="left:563px;top:96px"><path d="M13.500 8.500A5.500 5.500 0 1 1 10.500 3.500M10 .8v3.400h3.400" fill="none" stroke="#ccc" stroke-width="1.200"/></svg>
<div class="box" style="left:601px;width:342px"></div>
<svg class="i" style="left:614px;top:96px"><circle cx="7" cy="7" r="4.200" fill="none" stroke="#666" stroke-width="1.100"/><path d="M10 10l4 4.500" stroke="#666" stroke-width="1.100"/></svg>
<span class="t q" style="left:642px;top:104px;letter-spacing:.4px">在 port 中搜索</span>

<div class="dv"></div>
<div class="hl" style="left:-1px;top:697px;width:154px;height:28px"></div>
<svg class="i" style="left:4px;top:151px;color:#bbb"><use href="#cd"/></svg>
<svg class="i" style="left:27px;top:151px"><use href="#ho"/></svg><span class="t c" style="left:48px;top:159px">主文件夹</span>
<svg class="i" style="left:35px;top:183px"><use href="#de"/></svg><span class="t c" style="left:56px;top:191px">桌面</span><svg class="i" style="left:137px;top:183px"><use href="#pn"/></svg>
<svg class="i" style="left:35px;top:215px"><use href="#dl"/></svg><span class="t c" style="left:56px;top:223px">下载</span><svg class="i" style="left:137px;top:215px"><use href="#pn"/></svg>
<svg class="i" style="left:35px;top:247px"><use href="#dt"/></svg><span class="t c" style="left:56px;top:255px">文档</span><svg class="i" style="left:137px;top:247px"><use href="#pn"/></svg>
<svg class="i" style="left:35px;top:279px"><use href="#pc"/></svg><span class="t c" style="left:56px;top:287px">图片</span><svg class="i" style="left:137px;top:279px"><use href="#pn"/></svg>
<svg class="i" style="left:35px;top:311px"><use href="#fo"/></svg><span class="t" style="left:56px;top:319px;width:97px;overflow:hidden;letter-spacing:-.4px">CORTEX_STM32F103_Keil</span>
<svg class="i" style="left:35px;top:343px"><use href="#fo"/></svg><span class="t" style="left:56px;top:351px">MDK-ARM</span>
<svg class="i" style="left:35px;top:375px"><use href="#fx"/></svg><span class="t" style="left:56px;top:383px">MDK-ARM</span>
<svg class="i" style="left:35px;top:407px"><use href="#fo"/></svg><span class="t c" style="left:56px;top:415px">技术</span>
<svg class="i" style="left:4px;top:447px;color:#bbb"><use href="#cd"/></svg>
<svg class="i" style="left:27px;top:447px"><use href="#co"/></svg><span class="t c" style="left:48px;top:455px">此电脑</span>
<svg class="i" style="left:11px;top:479px;color:#777"><use href="#cr"/></svg><svg class="i" style="left:35px;top:479px"><use href="#vi"/></svg><span class="t c" style="left:56px;top:487px">视频</span>
<svg class="i" style="left:11px;top:511px;color:#777"><use href="#cr"/></svg><svg class="i" style="left:35px;top:511px"><use href="#pc"/></svg><span class="t c" style="left:56px;top:519px">图片</span>
<svg class="i" style="left:11px;top:543px;color:#777"><use href="#cr"/></svg><svg class="i" style="left:35px;top:543px"><use href="#dt"/></svg><span class="t c" style="left:56px;top:551px">文档</span>
<svg class="i" style="left:11px;top:575px;color:#777"><use href="#cr"/></svg><svg class="i" style="left:35px;top:575px"><use href="#dl"/></svg><span class="t c" style="left:56px;top:583px">下载</span>
<svg class="i" style="left:11px;top:607px;color:#777"><use href="#cr"/></svg><svg class="i" style="left:35px;top:607px"><use href="#mu"/></svg><span class="t c" style="left:56px;top:615px">音乐</span>
<svg class="i" style="left:11px;top:639px;color:#777"><use href="#cr"/></svg><svg class="i" style="left:35px;top:639px"><use href="#de"/></svg><span class="t c" style="left:56px;top:647px">桌面</span>
<svg class="i" style="left:11px;top:671px;color:#777"><use href="#cr"/></svg><svg class="i" style="left:35px;top:671px"><use href="#wi"/></svg><span class="t" style="left:56px;top:679px;letter-spacing:-.2px">Windows (C:)</span>
<svg class="i" style="left:11px;top:703px;color:#777"><use href="#cr"/></svg><svg class="i" style="left:35px;top:703px"><use href="#dr"/></svg><span class="t" style="left:56px;top:711px;letter-spacing:-.1px"><b>新加卷</b> (D:)</span>
<svg class="i" style="left:4px;top:743px;color:#777"><use href="#cr"/></svg><svg class="i" style="left:27px;top:743px"><use href="#ne"/></svg><span class="t c" style="left:48px;top:751px">网络</span>

<span class="t h" style="left:187px;top:147px">名称</span>
<svg class="i" style="left:296px;top:127px"><path d="M5 9.500L8 6.500l3 3" fill="none" stroke="#999"/></svg>
<div class="hs" style="left:428px"></div><span class="t h" style="left:435px;top:147px">修改日期</span>
<div class="hs" style="left:573px"></div><span class="t h" style="left:579px;top:147px">类型</span>
<div class="hs" style="left:692px"></div><span class="t h" style="left:699px;top:147px">大小</span>
<div class="hs" style="left:772px"></div>

<div class="sl" style="left:172px;top:166px;width:596px;height:27px"></div>
<svg class="i" style="left:175px;top:172px"><use href="#hf"/></svg><span class="t n" style="left:195px;top:180px">FreeRTOSConfig.h</span><span class="t d" style="left:435px;top:180px">2023/3/3 23:10</span><span class="t y" style="left:579px;top:180px">H <b>文件</b></span><span class="t s" style="top:180px">4 KB</span>
<svg class="i" style="left:175px;top:203px"><use href="#dc"/></svg><span class="t n" style="left:195px;top:211px">heap_4.c</span><span class="t d" style="left:435px;top:211px">2023/3/3 23:12</span><span class="t y" style="left:579px;top:211px">C <b>文件</b></span><span class="t s" style="top:211px">21 KB</span>
<svg class="i" style="left:175px;top:234px"><use href="#dc"/></svg><span class="t n" style="left:195px;top:242px;letter-spacing:.1px">port.c</span><span class="t d" style="left:435px;top:242px">2023/3/3 23:12</span><span class="t y" style="left:579px;top:242px">C <b>文件</b></span><span class="t s" style="top:242px">33 KB</span>
<svg class="i" style="left:175px;top:265px"><use href="#hf"/></svg><span class="t n" style="left:195px;top:273px;letter-spacing:.25px">portmacro.h</span><span class="t d" style="left:435px;top:273px">2023/3/3 23:12</span><span class="t y" style="left:579px;top:273px">H <b>文件</b></span><span class="t s" style="top:273px">10 KB</span>

<span class="t k" style="left:11px;top:1011px">4 个项目</span><div class="tx" style="left:68px"></div>
<span class="t k" style="left:79px;top:1011px">选中 1 个项目</span>
<span class="t k" style="left:162px;top:1011px">3.31 KB</span><div class="tx" style="left:217px"></div>
<svg style="position:absolute;left:907px;top:1000px;width:22px;height:23px"><use href="#vd"/></svg>
<svg style="position:absolute;left:932px;top:1003px;width:16px;height:18px"><use href="#vt"/></svg>
</div></div>

<!-- ANNOTATIONS -->
<svg style="position:absolute;left:0;top:0;width:1905px;height:1023px" viewBox="0 0 1905 1023">
<rect x="172" y="256" width="152" height="31" fill="none" stroke="#e21c26" stroke-width="2"/>
<rect x="1136" y="165" width="210" height="28" fill="none" stroke="#e21c26" stroke-width="2"/>
<polygon points="333,270 1097,172 1098,167 1120,174 1101,186 1100,181 640,236 333,272" fill="#ed1c24"/>
</svg>
<span class="t" style="left:1719px;top:1005px;font-size:16.500px;color:rgba(255,255,255,.55)">CSDN @qq_35594681</span>
</body>
</html>
